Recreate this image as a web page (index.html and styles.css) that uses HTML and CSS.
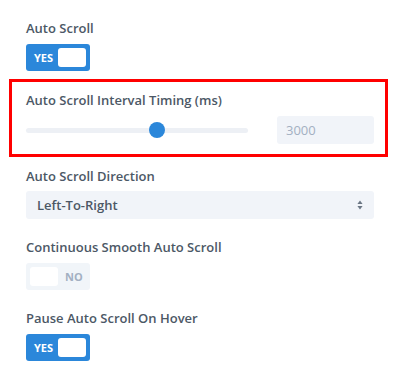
FILE: index.html
```html
<!DOCTYPE html>
<html>
<head>
<meta charset="utf-8">
<link rel="stylesheet" href="styles.css">
</head>
<body>
<div class="panel">
  <div class="field">
    <div class="label">Auto Scroll</div>
    <div class="toggle on"><span class="tgl-text">YES</span><span class="knob"></span></div>
  </div>

  <div class="field highlight">
    <div class="label">Auto Scroll Interval Timing (ms)</div>
    <div class="range-row">
      <div class="slider">
        <div class="track"></div>
        <div class="thumb" style="left: 59%;"></div>
      </div>
      <div class="num-input">3000</div>
    </div>
  </div>

  <div class="field after-hl">
    <div class="label">Auto Scroll Direction</div>
    <div class="select">
      <span class="select-text">Left-To-Right</span>
      <svg class="select-arrow" width="6" height="10" viewBox="0 0 6 10"><path d="M3 0.5 L5.6 4 L0.4 4 Z M3 9.5 L5.6 6 L0.4 6 Z" fill="#6b7684"/></svg>
    </div>
  </div>

  <div class="field">
    <div class="label">Continuous Smooth Auto Scroll</div>
    <div class="toggle off"><span class="knob"></span><span class="tgl-text">NO</span></div>
  </div>

  <div class="field">
    <div class="label">Pause Auto Scroll On Hover</div>
    <div class="toggle on"><span class="tgl-text">YES</span><span class="knob"></span></div>
  </div>

  <div class="field last">
    <div class="label">Slide Loop Mode</div>
  </div>
</div>
</body>
</html>
```
FILE: styles.css
```css
html, body {
  margin: 0;
  padding: 0;
  background: #ffffff;
  overflow: hidden;
}
body {
  font-family: "Open Sans", "Noto Sans", sans-serif;
  color: #4c5866;
}
.panel {
  padding: 19px 26px 0 26px;
}
.field {
  display: flex;
  flex-direction: column;
  align-items: flex-start;
  gap: 7px;
  margin-top: 19px;
}
.field:first-child {
  margin-top: 0;
}
.field.last {
  margin-top: 24px;
}
.label {
  font-size: 13px;
  font-weight: 600;
  line-height: 18px;
  color: #4c5866;
  white-space: nowrap;
}
.highlight {
  margin: 8px -14px 0 -17px;
  border: 3px solid #ff0000;
  padding: 9px 11px 10px 14px;
  align-items: stretch;
}
.after-hl {
  margin-top: 10px;
  align-items: stretch;
  gap: 6px;
}

.toggle {
  display: flex;
  align-items: center;
  width: 64px;
  height: 27px;
  box-sizing: border-box;
  border-radius: 3px;
  padding: 4px;
}
.toggle.on {
  background: #2b87da;
  justify-content: space-between;
  padding-left: 8px;
}
.toggle.off {
  background: #f1f5f9;
  gap: 7px;
}
.tgl-text {
  font-size: 11px;
  font-weight: 700;
  line-height: 19px;
}
.toggle.on .tgl-text { color: #ffffff; }
.toggle.off .tgl-text { color: #a3b0c2; }
.knob {
  width: 28px;
  height: 19px;
  background: #ffffff;
  border-radius: 3px;
}

.range-row {
  display: flex;
  align-items: center;
  gap: 29px;
  height: 28px;
}
.slider {
  position: relative;
  width: 222px;
  height: 16px;
  display: flex;
  align-items: center;
}
.track {
  width: 100%;
  height: 5px;
  border-radius: 3px;
  background: #edf0f5;
}
.thumb {
  position: absolute;
  top: 0;
  width: 16px;
  height: 16px;
  margin-left: -8px;
  border-radius: 50%;
  background: #2b87da;
}
.num-input {
  width: 97px;
  height: 28px;
  box-sizing: border-box;
  padding: 0 9px;
  background: #f1f4f9;
  border-radius: 3px;
  font-size: 13px;
  line-height: 28px;
  color: #a3b0c2;
}

.select {
  display: flex;
  align-items: center;
  justify-content: space-between;
  height: 28px;
  box-sizing: border-box;
  padding: 0 11px 0 11px;
  background: #f1f4f9;
  border-radius: 3px;
}
.select-text {
  font-size: 13px;
  font-weight: 600;
  color: #4c5866;
}
.select-arrow {
  display: block;
}
```
